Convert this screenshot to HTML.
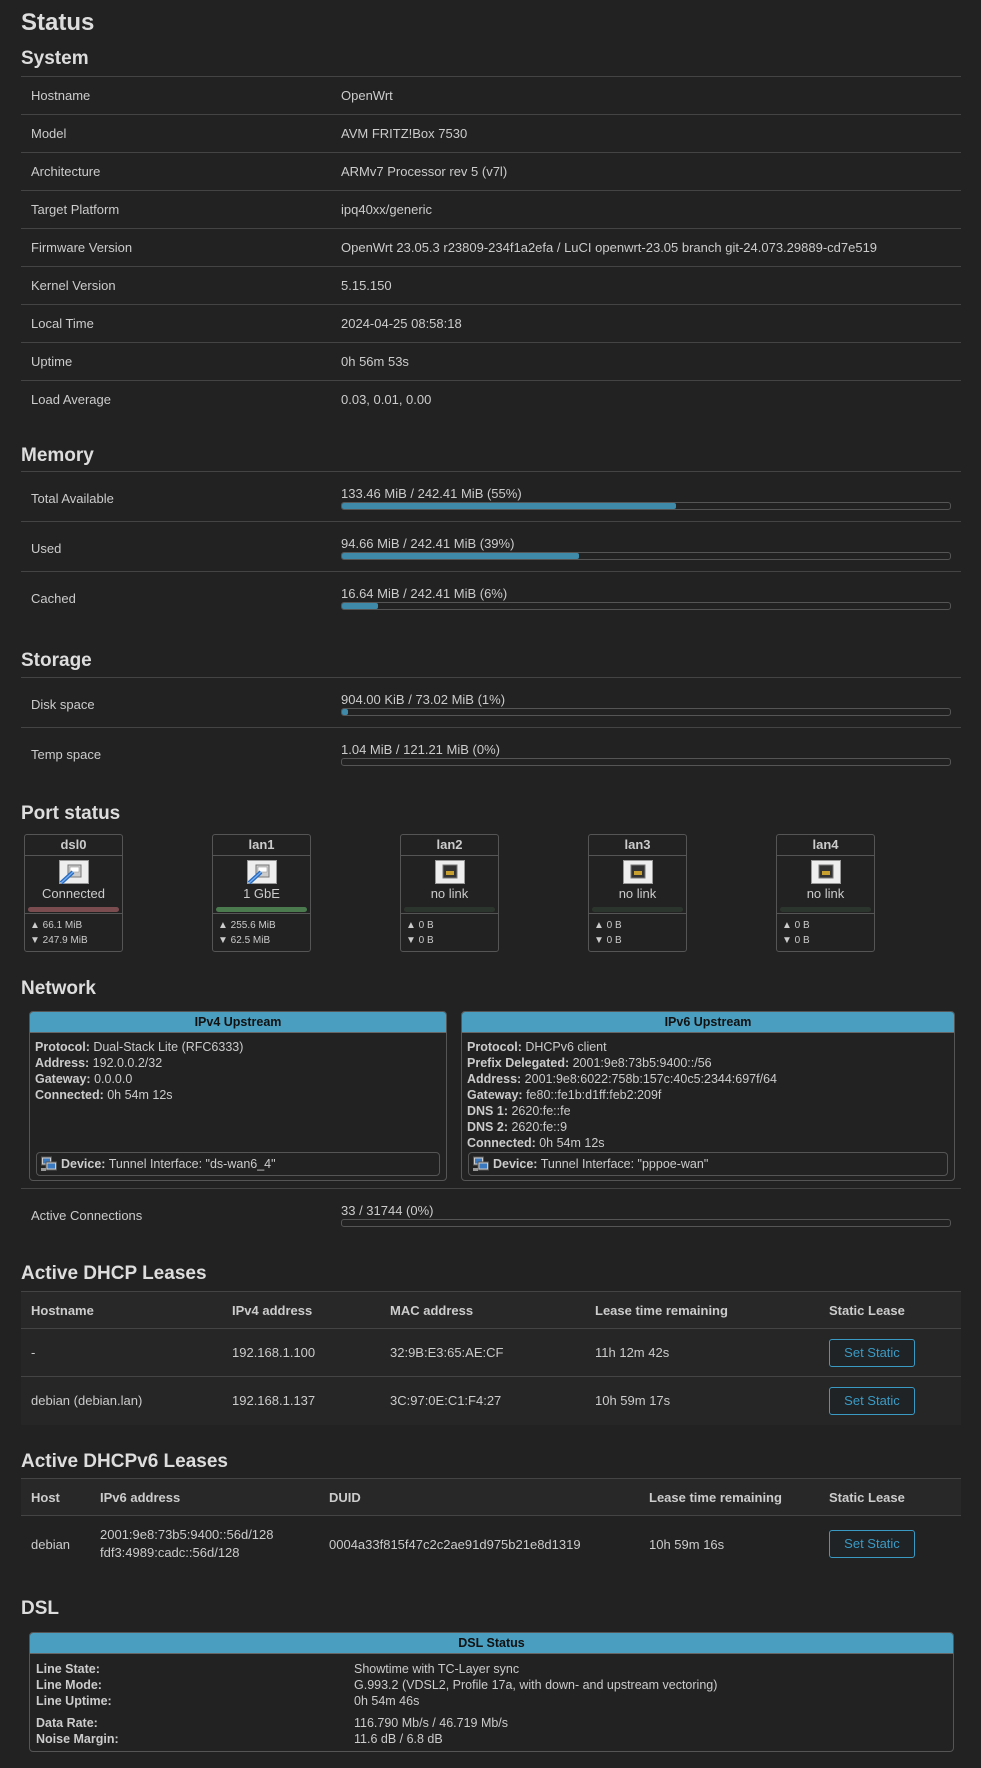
<!DOCTYPE html>
<html><head><meta charset="utf-8"><style>
*{box-sizing:border-box;margin:0;padding:0}
body{width:981px;height:1768px;background:#222;color:#ccc;font-family:"Liberation Sans",sans-serif;font-size:13px;position:relative;overflow:hidden}
.a{position:absolute}
h1{position:absolute;left:21px;font-size:24px;font-weight:bold;color:#ddd}
h2{position:absolute;left:21px;font-size:19px;font-weight:bold;color:#ddd}
.row{position:absolute;left:21px;width:940px;border-top:1px solid #444}
.row .l{position:absolute;left:10px}
.row .v{position:absolute;left:320px}
.pb{position:absolute;left:320px;width:610px;height:8px;border:1px solid #555;border-radius:3px;background:#222}
.pb div{height:100%;background:#3f8aa8;border-radius:2px}
.port{position:absolute;top:834px;width:99px;height:118px;border:1px solid #555;border-radius:3px}
.port .n{height:21px;border-bottom:1px solid #555;text-align:center;font-weight:bold;line-height:20px;font-size:13px}
.port svg{position:absolute;left:34px;top:25px}
.port .t{position:absolute;top:51px;width:100%;text-align:center;font-size:13px}
.port .bar{position:absolute;left:3px;right:3px;top:72px;height:5px;border-radius:3px}
.port .sep{position:absolute;left:0;right:0;top:78px;border-top:1px solid #555}
.port .s{position:absolute;left:5px;top:83px;font-size:10px;line-height:15px}
.box{position:absolute;border:1px solid #555;border-radius:4px;overflow:hidden}
.box .hd{background:#4a9fc0;color:#111;font-weight:bold;text-align:center;height:21px;line-height:21px;font-size:12.5px;border-bottom:1px solid #666}
.box .bd{padding:6px 5px;font-size:12.5px;line-height:16px}
.dev{position:absolute;left:6px;right:6px;bottom:4px;height:24px;border:1px solid #555;border-radius:4px;font-size:12.5px;line-height:22px;padding-left:24px}
.dev svg{position:absolute;left:4px;top:3px}
table{position:absolute;left:21px;width:940px;border-collapse:collapse;table-layout:fixed}
th{text-align:left;font-weight:bold;padding-left:10px;background:#282828;border-top:1px solid #444;border-bottom:1px solid #444}
td{padding-left:10px;background:#262626;border-bottom:1px solid #444}
.btn{display:inline-block;width:86px;height:28px;border:1px solid #3a9ac4;border-radius:3px;color:#3a9ac4;text-align:center;line-height:26px;background:#1f2326}
</style></head><body>
<svg width="0" height="0" style="position:absolute"><defs>
<symbol id="up" viewBox="0 0 30 24"><rect x="0.5" y="0.5" width="29" height="23" fill="#eee" stroke="#999"/><rect x="9" y="5" width="13" height="12" fill="#ccc" stroke="#777"/><rect x="11" y="7" width="9" height="5" fill="#fff" stroke="#888" stroke-width=".5"/><path d="M2 23 L14 12" stroke="#2a6cc0" stroke-width="4"/><path d="M2 23 L14 12" stroke="#7ab0f0" stroke-width="1.2"/></symbol>
<symbol id="dn" viewBox="0 0 30 24"><rect x="0.5" y="0.5" width="29" height="23" fill="#eee" stroke="#999"/><rect x="8" y="5" width="14" height="13" fill="#333" stroke="#777"/><rect x="11" y="11" width="8" height="4" fill="#c8a030"/></symbol>
<symbol id="pc" viewBox="0 0 16 16"><rect x="0.5" y="1" width="10" height="8" fill="#ccc" stroke="#555"/><rect x="2" y="2.5" width="7" height="5" fill="#3a78c0"/><rect x="5" y="6" width="10.5" height="8" fill="#ccc" stroke="#555"/><rect x="6.5" y="7.5" width="7.5" height="5" fill="#3a78c0"/><rect x="0" y="12" width="5" height="3" fill="#999"/></symbol>
</defs></svg>
<h1 style="top:9px">Status</h1>
<h2 style="top:48px">System</h2>
<div class="row" style="top:76px;height:38px"><span class="l" style="top:11px">Hostname</span><span class="v" style="top:11px">OpenWrt</span></div>
<div class="row" style="top:114px;height:38px"><span class="l" style="top:11px">Model</span><span class="v" style="top:11px">AVM FRITZ!Box 7530</span></div>
<div class="row" style="top:152px;height:38px"><span class="l" style="top:11px">Architecture</span><span class="v" style="top:11px">ARMv7 Processor rev 5 (v7l)</span></div>
<div class="row" style="top:190px;height:38px"><span class="l" style="top:11px">Target Platform</span><span class="v" style="top:11px">ipq40xx/generic</span></div>
<div class="row" style="top:228px;height:38px"><span class="l" style="top:11px">Firmware Version</span><span class="v" style="top:11px">OpenWrt 23.05.3 r23809-234f1a2efa / LuCI openwrt-23.05 branch git-24.073.29889-cd7e519</span></div>
<div class="row" style="top:266px;height:38px"><span class="l" style="top:11px">Kernel Version</span><span class="v" style="top:11px">5.15.150</span></div>
<div class="row" style="top:304px;height:38px"><span class="l" style="top:11px">Local Time</span><span class="v" style="top:11px">2024-04-25 08:58:18</span></div>
<div class="row" style="top:342px;height:38px"><span class="l" style="top:11px">Uptime</span><span class="v" style="top:11px">0h 56m 53s</span></div>
<div class="row" style="top:380px;height:38px"><span class="l" style="top:11px">Load Average</span><span class="v" style="top:11px">0.03, 0.01, 0.00</span></div>

<h2 style="top:445px">Memory</h2>
<div class="row" style="top:471px;height:50px"><span class="l" style="top:19px">Total Available</span><span class="v" style="top:14px">133.46 MiB / 242.41 MiB (55%)</span><div class="pb" style="top:30px"><div style="width:55%"></div></div></div>
<div class="row" style="top:521px;height:50px"><span class="l" style="top:19px">Used</span><span class="v" style="top:14px">94.66 MiB / 242.41 MiB (39%)</span><div class="pb" style="top:30px"><div style="width:39%"></div></div></div>
<div class="row" style="top:571px;height:50px"><span class="l" style="top:19px">Cached</span><span class="v" style="top:14px">16.64 MiB / 242.41 MiB (6%)</span><div class="pb" style="top:30px"><div style="width:6%"></div></div></div>

<h2 style="top:650px">Storage</h2>
<div class="row" style="top:677px;height:50px"><span class="l" style="top:19px">Disk space</span><span class="v" style="top:14px">904.00 KiB / 73.02 MiB (1%)</span><div class="pb" style="top:30px"><div style="width:1%"></div></div></div>
<div class="row" style="top:727px;height:50px"><span class="l" style="top:19px">Temp space</span><span class="v" style="top:14px">1.04 MiB / 121.21 MiB (0%)</span><div class="pb" style="top:30px"><div style="width:0"></div></div></div>

<h2 style="top:803px">Port status</h2>
<div class="port" style="left:24px"><div class="n">dsl0</div><svg width="30" height="24"><use href="#up"/></svg><div class="t">Connected</div><div class="bar" style="background:#7a4c50"></div><div class="sep"></div><div class="s">▲ 66.1 MiB<br>▼ 247.9 MiB</div></div>
<div class="port" style="left:212px"><div class="n">lan1</div><svg width="30" height="24"><use href="#up"/></svg><div class="t">1 GbE</div><div class="bar" style="background:#4a7a4e"></div><div class="sep"></div><div class="s">▲ 255.6 MiB<br>▼ 62.5 MiB</div></div>
<div class="port" style="left:400px"><div class="n">lan2</div><svg width="30" height="24"><use href="#dn"/></svg><div class="t">no link</div><div class="bar" style="background:#2c352d"></div><div class="sep"></div><div class="s">▲ 0 B<br>▼ 0 B</div></div>
<div class="port" style="left:588px"><div class="n">lan3</div><svg width="30" height="24"><use href="#dn"/></svg><div class="t">no link</div><div class="bar" style="background:#2c352d"></div><div class="sep"></div><div class="s">▲ 0 B<br>▼ 0 B</div></div>
<div class="port" style="left:776px"><div class="n">lan4</div><svg width="30" height="24"><use href="#dn"/></svg><div class="t">no link</div><div class="bar" style="background:#2c352d"></div><div class="sep"></div><div class="s">▲ 0 B<br>▼ 0 B</div></div>

<h2 style="top:978px">Network</h2>
<div class="box" style="left:29px;top:1011px;width:418px;height:170px"><div class="hd">IPv4 Upstream</div><div class="bd"><b>Protocol:</b> Dual-Stack Lite (RFC6333)<br><b>Address:</b> 192.0.0.2/32<br><b>Gateway:</b> 0.0.0.0<br><b>Connected:</b> 0h 54m 12s</div><div class="dev"><svg width="16" height="16"><use href="#pc"/></svg><b>Device:</b> Tunnel Interface: "ds-wan6_4"</div></div>
<div class="box" style="left:461px;top:1011px;width:494px;height:170px"><div class="hd">IPv6 Upstream</div><div class="bd"><b>Protocol:</b> DHCPv6 client<br><b>Prefix Delegated:</b> 2001:9e8:73b5:9400::/56<br><b>Address:</b> 2001:9e8:6022:758b:157c:40c5:2344:697f/64<br><b>Gateway:</b> fe80::fe1b:d1ff:feb2:209f<br><b>DNS 1:</b> 2620:fe::fe<br><b>DNS 2:</b> 2620:fe::9<br><b>Connected:</b> 0h 54m 12s</div><div class="dev"><svg width="16" height="16"><use href="#pc"/></svg><b>Device:</b> Tunnel Interface: "pppoe-wan"</div></div>
<div class="row" style="top:1188px;height:50px"><span class="l" style="top:19px">Active Connections</span><span class="v" style="top:14px">33 / 31744 (0%)</span><div class="pb" style="top:30px"><div style="width:0"></div></div></div>

<h2 style="top:1263px">Active DHCP Leases</h2>
<table style="top:1291px">
<colgroup><col style="width:201px"><col style="width:158px"><col style="width:205px"><col style="width:234px"><col></colgroup>
<tr style="height:37px"><th>Hostname</th><th>IPv4 address</th><th>MAC address</th><th>Lease time remaining</th><th>Static Lease</th></tr>
<tr style="height:48px"><td>-</td><td>192.168.1.100</td><td>32:9B:E3:65:AE:CF</td><td>11h 12m 42s</td><td><span class="btn">Set Static</span></td></tr>
<tr style="height:48px"><td style="border-bottom:none">debian (debian.lan)</td><td style="border-bottom:none">192.168.1.137</td><td style="border-bottom:none">3C:97:0E:C1:F4:27</td><td style="border-bottom:none">10h 59m 17s</td><td style="border-bottom:none"><span class="btn">Set Static</span></td></tr>
</table>

<h2 style="top:1451px">Active DHCPv6 Leases</h2>
<table style="top:1478px">
<colgroup><col style="width:69px"><col style="width:229px"><col style="width:320px"><col style="width:180px"><col></colgroup>
<tr style="height:37px"><th>Host</th><th>IPv6 address</th><th>DUID</th><th>Lease time remaining</th><th>Static Lease</th></tr>
<tr style="height:57px"><td style="border:none;background:#222">debian</td><td style="border:none;background:#222;line-height:18px">2001:9e8:73b5:9400::56d/128<br>fdf3:4989:cadc::56d/128</td><td style="border:none;background:#222">0004a33f815f47c2c2ae91d975b21e8d1319</td><td style="border:none;background:#222">10h 59m 16s</td><td style="border:none;background:#222"><span class="btn">Set Static</span></td></tr>
</table>

<h2 style="top:1598px">DSL</h2>
<div class="box" style="left:29px;top:1632px;width:925px;height:120px"><div class="hd">DSL Status</div>
<div class="a" style="left:6px;top:28px;font-size:12.5px;line-height:16px;font-weight:bold">Line State:<br>Line Mode:<br>Line Uptime:<div style="height:6px"></div>Data Rate:<br>Noise Margin:</div>
<div class="a" style="left:324px;top:28px;font-size:12.5px;line-height:16px">Showtime with TC-Layer sync<br>G.993.2 (VDSL2, Profile 17a, with down- and upstream vectoring)<br>0h 54m 46s<div style="height:6px"></div>116.790 Mb/s / 46.719 Mb/s<br>11.6 dB / 6.8 dB</div>
</div>
</body></html>
